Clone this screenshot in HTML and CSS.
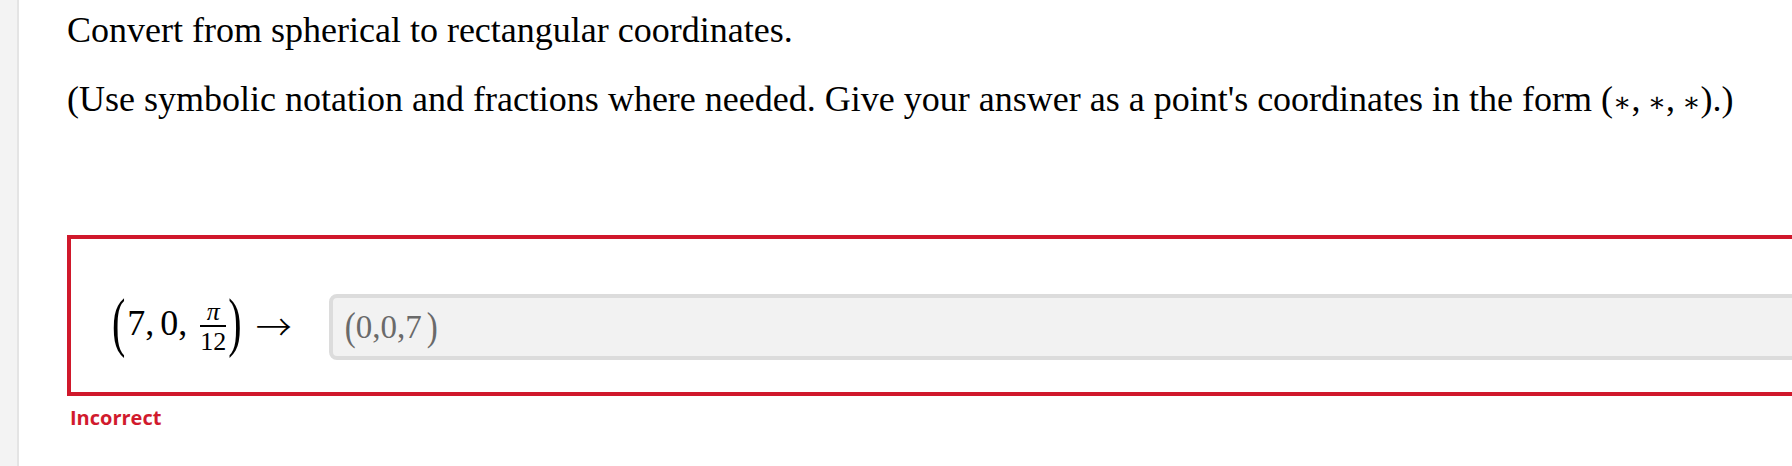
FILE: index.html
```html
<!DOCTYPE html>
<html lang="en">
<head>
<meta charset="utf-8">
<title>Spherical to rectangular</title>
<link rel="stylesheet" href="styles.css">
</head>
<body>
<div class="page">
  <aside class="rail"></aside>
  <main class="content">
    <p class="q first">Convert from spherical to rectangular coordinates.</p>
    <p class="q second">(Use symbolic notation and fractions where needed. Give your answer as a point's coordinates in the form <span class="form">(<span class="ast">∗</span>,&thinsp;<span class="ast">∗</span>,&thinsp;<span class="ast">∗</span>)</span>.)</p>
    <div class="response">
      <div class="row">
        <div class="expr">
          <span class="paren big open">(</span>
          <span class="mn">7</span><span class="mp sep">,</span>
          <span class="mn">0</span><span class="mp">,</span>
          <span class="frac">
            <span class="num">π</span>
            <span class="bar"></span>
            <span class="den">12</span>
          </span>
          <span class="paren big">)</span>
          <span class="arrow">→</span>
        </div>
        <div class="answer">
          <span class="paren small">(</span><span class="ans-text">0,0,7</span><span class="paren small close">)</span>
        </div>
      </div>
    </div>
    <div class="feedback">Incorrect</div>
  </main>
</div>
</body>
</html>
```
FILE: styles.css
```css
html, body {
  margin: 0;
  padding: 0;
  background: #ffffff;
  overflow: hidden;
}

body {
  font-family: "Liberation Serif", "Times New Roman", serif;
  color: #000000;
}

.page {
  display: flex;
  min-height: 466px;
}

.rail {
  flex: none;
  width: 17px;
  background: #f3f3f3;
  border-right: 2px solid #e4e4e4;
}

.content {
  flex: 1;
  min-width: 0;
  padding-left: 48px;
}

.q {
  margin: 0;
  font-size: 36px;
  line-height: 41px;
  white-space: nowrap;
}

.q.first {
  margin-top: 10px;
}

.q.second {
  margin-top: 28px;
}

.ast {
  font-family: "DejaVu Serif", serif;
  font-size: 27px;
}

.response {
  margin-top: 113px;
  margin-right: -40px;
  border: 4px solid #d0182b;
  padding: 55px 0 32px 41px;
}

.row {
  display: flex;
  align-items: center;
}

.expr {
  display: flex;
  align-items: center;
  flex: none;
  font-size: 36px;
}

.mn, .mp {
  line-height: 36px;
  padding-bottom: 8px;
}

.mp.sep {
  margin-right: 6px;
}

.paren.big {
  display: inline-block;
  font-size: 40px;
  line-height: 40px;
  margin-top: -9px;
  transform: scaleY(1.64);
}

.paren.big.open {
  margin-right: 2px;
}

.frac {
  display: inline-flex;
  flex-direction: column;
  align-items: center;
  width: 26px;
  margin: 0 2px 0 13px;
  font-size: 26px;
}

.num {
  font-style: italic;
  line-height: 22px;
}

.bar {
  align-self: stretch;
  height: 2px;
  background: #000000;
  margin-top: 2px;
}

.den {
  line-height: 22px;
  margin-top: 4px;
}

.arrow {
  font-family: "Noto Sans CJK JP", "DejaVu Sans", sans-serif;
  font-weight: 300;
  font-size: 36px;
  line-height: 36px;
  margin-left: 14px;
  padding-bottom: 4px;
}

.answer {
  flex: 1;
  height: 58px;
  margin-left: 37px;
  border: 4px solid #dcdcdc;
  border-radius: 8px;
  background: #f2f2f2;
  padding-left: 12px;
  display: flex;
  align-items: center;
  color: #6a6a6a;
  font-size: 33px;
}

.paren.small {
  display: inline-block;
  transform: scaleY(1.2);
  line-height: 33px;
}

.paren.small.close {
  margin-left: 5px;
}

.ans-text {
  line-height: 33px;
}

.feedback {
  margin-top: 8px;
  padding-left: 3px;
  font-family: "Open Sans", "Liberation Sans", sans-serif;
  font-weight: 700;
  font-size: 20px;
  line-height: 27px;
  color: #d11a2d;
}
```
